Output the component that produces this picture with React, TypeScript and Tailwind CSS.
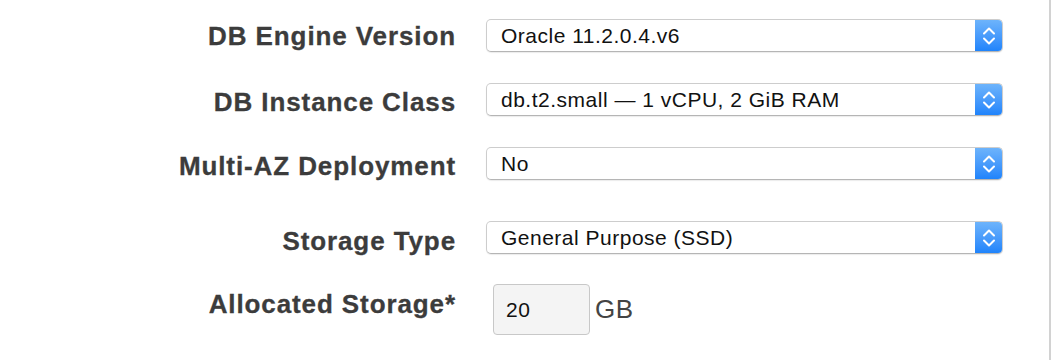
import React from 'react';

type Row = {
    label: string;
    value: string;
    pt: string;
    mb: string;
};

function Chevrons() {
    return (
        <svg width="14" height="20" viewBox="0 0 14 20" fill="none">
            <path d="M2 7.5 L7 2.5 L12 7.5" stroke="white" strokeWidth="2" strokeLinecap="round" strokeLinejoin="round" />
            <path d="M2 12.5 L7 17.5 L12 12.5" stroke="white" strokeWidth="2" strokeLinecap="round" strokeLinejoin="round" />
        </svg>
    );
}

function SelectBox({ value }: { value: string }) {
    return (
        <div className="flex h-[33px] w-[517px] rounded-[5px] border border-[#cdcdcd] border-b-[#b5b5b5] bg-white shadow-[0_1px_1px_rgba(0,0,0,0.08)] overflow-hidden">
            <div className="flex-1 flex items-center pl-[14px] text-[21px] leading-none tracking-[0.5px] text-[#111]">
                {value}
            </div>
            <div className="w-[28px] -my-px -mr-px flex items-center justify-center rounded-r-[5px] bg-gradient-to-b from-[#6fb5fb] to-[#1b82fb]">
                <Chevrons />
            </div>
        </div>
    );
}

function Label({ children, pt }: { children: React.ReactNode; pt: string }) {
    return (
        <div className={`w-[456px] shrink-0 text-right text-[26px] leading-[30px] font-bold tracking-[0.9px] text-[#3c3c3c] [-webkit-text-stroke:0.3px_#3c3c3c] ${pt}`}>
            {children}
        </div>
    );
}

export default function App() {
    const rows: Row[] = [
        { label: 'DB Engine Version', value: 'Oracle 11.2.0.4.v6', pt: 'pt-[2px]', mb: 'mb-[31px]' },
        { label: 'DB Instance Class', value: 'db.t2.small — 1 vCPU, 2 GiB RAM', pt: 'pt-[4px]', mb: 'mb-[31px]' },
        { label: 'Multi-AZ Deployment', value: 'No', pt: 'pt-[4px]', mb: 'mb-[41px]' },
        { label: 'Storage Type', value: 'General Purpose (SSD)', pt: 'pt-[5px]', mb: 'mb-[30px]' },
    ];

    return (
        <div className="w-[1052px] h-[360px] bg-white flex overflow-hidden" style={{ fontFamily: '"Liberation Sans", Arial, Helvetica, sans-serif' }}>
            <div className="w-[1051px] h-full border-r-2 border-[#d2d2d2] pt-[19px]">
                {rows.map((r) => (
                    <div key={r.label} className={`flex items-start h-[33px] ${r.mb}`}>
                        <Label pt={r.pt}>{r.label}</Label>
                        <div className="ml-[30px]">
                            <SelectBox value={r.value} />
                        </div>
                    </div>
                ))}

                <div className="flex items-start h-[51px]">
                    <Label pt="pt-[5px]">Allocated Storage*</Label>
                    <div className="ml-[37px] flex items-center gap-[5px]">
                        <div className="w-[97px] h-[51px] rounded-[4px] border border-[#c8c8c8] bg-[#f4f4f4] flex items-center pl-[12px] text-[21px] tracking-[0.5px] text-[#111]">
                            20
                        </div>
                        <span className="text-[26px] tracking-[0.5px] text-[#444]">GB</span>
                    </div>
                </div>
            </div>
        </div>
    );
}
